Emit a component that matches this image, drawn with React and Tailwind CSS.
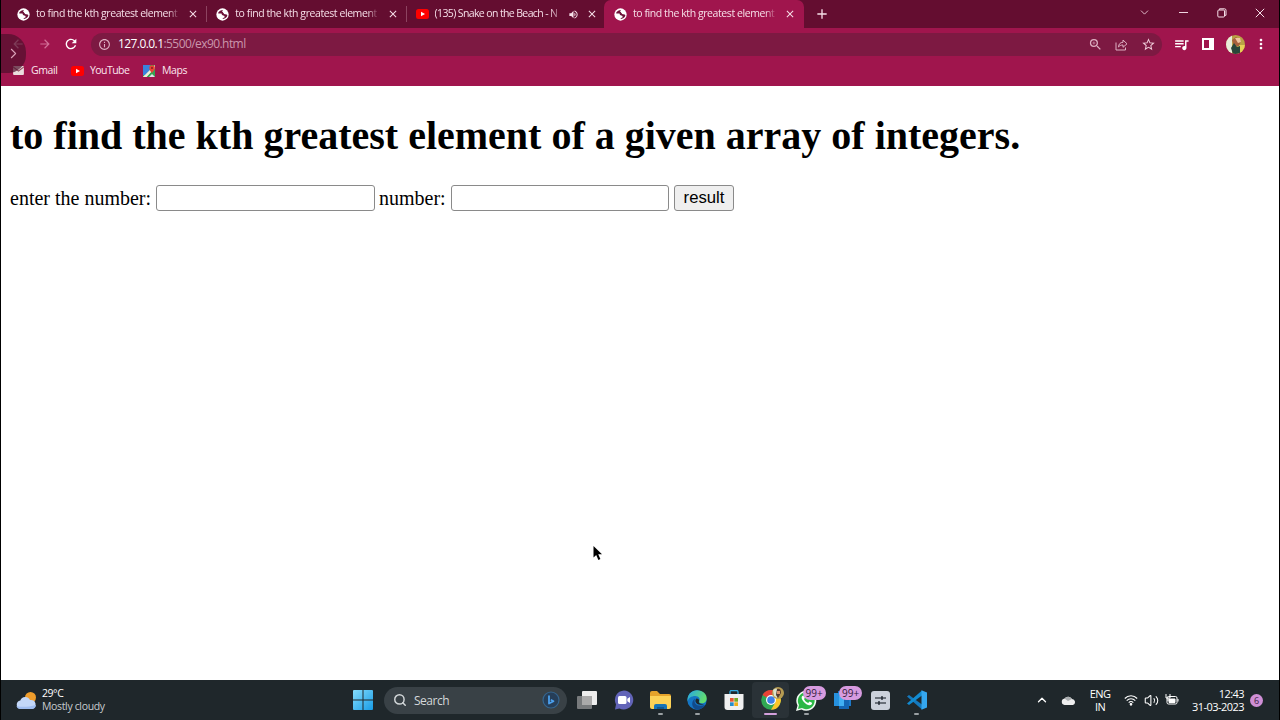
import { MdClose, MdAdd, MdArrowBack, MdArrowForward, MdRefresh, MdInfoOutline, MdZoomIn, MdStarBorder, MdQueueMusic, MdMoreVert, MdVolumeUp } from "react-icons/md";
import { LuChevronDown, LuChevronRight, LuChevronUp, LuSearch, LuVolume2 } from "react-icons/lu";

const TITLE = "to find the kth greatest element";

const tabs = [
  { id: 1, title: TITLE, icon: "globe" },
  { id: 2, title: TITLE, icon: "globe" },
  { id: 3, title: "(135) Snake on the Beach - N", icon: "youtube", sound: true },
];

function Globe() {
  return (
    <svg className="w-[13px] h-[13px] shrink-0" viewBox="0 0 26 26">
      <circle cx="13" cy="13" r="12.3" fill="#fff" />
      <path
        d="M4 10c2-4 6-6 10-6l-2 3 3 2 1 3 5 1c2 0 2 2 1 4-2 3-5 5-9 5l1-2 3-1v-3l-5-2-1-3-6 0z"
        fill="#6d1238"
      />
      <path d="M14 7l5-1 2 3-4 2-3-2z" fill="#fff" />
    </svg>
  );
}

function YouTubeIcon() {
  return (
    <svg className="w-[13px] h-[10px] shrink-0" viewBox="0 0 26 20">
      <rect x="0" y="0" width="26" height="20" rx="5" fill="#f00" />
      <path d="M10 5.500l8 4.500-8 4.500z" fill="#fff" />
    </svg>
  );
}

function Tab({ tab }) {
  return (
    <div className="flex items-center w-[199.3px] h-full pl-[9px]">
      {tab.icon === "globe" ? <Globe /> : <YouTubeIcon />}
      <span
        className={
          tab.sound
            ? "ml-[6px] w-[130px] shrink-0 whitespace-nowrap text-[10.5px] tracking-[-0.62px] mask-r-from-88% mask-r-to-100%"
            : "ml-[6px] w-[144px] shrink-0 whitespace-nowrap text-[10.5px] tracking-[-0.42px] mask-r-from-92% mask-r-to-100%"
        }
      >
        {tab.title}
      </span>
      {tab.sound && <MdVolumeUp className="ml-[3px] shrink-0" size={11} />}
      <MdClose className="ml-auto mr-[7px] shrink-0" size={12} />
      <span className={tab.sound ? "w-px h-4 shrink-0" : "w-px h-4 shrink-0 bg-[#8d4360]"} />
    </div>
  );
}

function TabStrip() {
  return (
    <div className="flex h-7 pl-[7px] bg-[#640d30] text-[#f6dfe8]">
      {tabs.map((tab) => (
        <Tab key={tab.id} tab={tab} />
      ))}
      <div className="-ml-[2px] flex items-center w-[200px] h-full rounded-t-[7px] bg-[#a0154d] pl-[10px] pr-[8px]">
        <Globe />
        <span className="ml-[6px] w-[144px] shrink-0 whitespace-nowrap text-[10.5px] tracking-[-0.42px] mask-r-from-92% mask-r-to-100%">
          {TITLE}
        </span>
        <MdClose className="ml-auto shrink-0" size={12} />
      </div>
      <div className="flex items-center ml-[10px]">
        <MdAdd size={16} />
      </div>
      <div className="ml-auto flex items-center pb-[3px]">
        <div className="w-[38.3px] flex justify-center">
          <LuChevronDown size={13} strokeWidth={1.500} />
        </div>
        <div className="w-[38.3px] flex justify-center">
          <span className="w-[9px] h-px bg-[#f0d5e0]" />
        </div>
        <div className="w-[38.3px] flex justify-center">
          <svg width="10" height="10" viewBox="0 0 10 10" fill="none" stroke="currentColor">
            <rect x=".8" y="2" width="6.700" height="7" rx="1" />
            <path d="M2.500 1.800V.8h5q1.500 0 1.500 1.500v5H7.800" />
          </svg>
        </div>
        <div className="w-[38.3px] flex justify-center">
          <svg width="10" height="10" viewBox="0 0 10 10" stroke="currentColor">
            <path d="M.8.800l8.400 8.400M9.200.8L.8 9.200" />
          </svg>
        </div>
      </div>
    </div>
  );
}

function Toolbar() {
  return (
    <div className="flex items-center h-8 bg-[#a0154d] text-[#f8dce7]">
      <div className="flex items-center pl-[10px] w-[90px]">
        <MdArrowBack size={14} className="text-[#f0a5c2]" />
        <MdArrowForward size={14} className="ml-[13px] text-[#d36f97]" />
        <MdRefresh size={16} className="ml-[11px] text-white" />
      </div>
      <div className="flex items-center w-[1071px] h-[23px] rounded-full bg-[#7d1942] pl-[7px] text-[#deb0c2]">
        <MdInfoOutline size={13} />
        <span className="ml-[7px] text-[12px] tracking-[-0.57px] leading-none text-[#cb96ac]">
          <span className="text-white">127.0.0.1</span>:5500/ex90.html
        </span>
        <div className="ml-auto flex items-center pr-[6px]">
          <MdZoomIn size={15} />
          <svg className="ml-[12px]" width="13" height="13" viewBox="0 0 13 13" fill="none" stroke="currentColor">
            <path d="M1 4.500v7.500h9.500V9.500M3.500 9c.2-3 1.800-4.700 4.500-4.700V2l4 3.800-4 3.500V7C6 7 4.700 7.600 3.500 9z" />
          </svg>
          <MdStarBorder className="ml-[13px] text-[#f1cedb]" size={15} />
        </div>
      </div>
      <MdQueueMusic size={17} className="ml-[11px] text-white" />
      <div className="ml-[12px] w-[12px] h-[12px] border-2 border-r-[5px] border-white" />
      <svg className="ml-[12px]" width="19" height="19" viewBox="0 0 19 19">
        <defs>
          <clipPath id="avatar">
            <circle cx="9.500" cy="9.500" r="9.500" />
          </clipPath>
        </defs>
        <g clipPath="url(#avatar)">
          <path d="M0 0h19v19H0z" fill="#b9a145" />
          <path d="M0 0h6v19H0z" fill="#e8ecd9" />
          <path d="M12 10h7v9h-7z" fill="#e6cf55" />
          <path d="M6 5l4-3 5 4-2 5H8z" fill="#a7623e" />
          <path d="M5 13l3-5 3 4 3-1 0 8H7z" fill="#29463a" />
          <path d="M9 3l5 0 1 4-3 1z" fill="#efc5a0" />
        </g>
      </svg>
      <MdMoreVert size={16} className="ml-[8px] text-white" />
    </div>
  );
}

function Bookmarks() {
  return (
    <div className="flex items-center h-[26px] pb-[5px] pl-[12px] bg-[#a0154d] text-[#fbe6ee] text-[10.5px] tracking-[-0.4px]">
      <svg width="11" height="9" viewBox="0 0 12 10">
        <rect width="12" height="10" rx="1" fill="#eadede" />
        <path d="M0 1l6 4.500L12 1" fill="none" stroke="#9b5267" strokeWidth="1.300" />
      </svg>
      <span className="ml-[7px] w-[27px] whitespace-nowrap">Gmail</span>
      <span className="ml-[13px] flex">
        <YouTubeIcon />
      </span>
      <span className="ml-[6px] w-[40px] whitespace-nowrap tracking-[-0.55px]">YouTube</span>
      <svg className="ml-[13px]" width="12" height="12" viewBox="0 0 12 12">
        <rect width="12" height="12" rx="1" fill="#34a453" />
        <path d="M0 12L12 0v3L3 12z" fill="#f2eccf" />
        <path d="M0 0h7v5l-5 5H0z" fill="#3b82dc" />
        <path d="M1.500 10.500L8 4l1.500 1.500-6 6.500H0z" fill="#f0ead9" />
        <path d="M12 12H6l3-3z" fill="#dfe3e8" />
        <path d="M9 8C7.500 6 6.300 4.800 6.300 3a2.800 2.800 0 015.600 0c0 1.800-1.500 3-2.900 5z" fill="#e94335" />
        <circle cx="9" cy="3" r="1" fill="#82221d" />
      </svg>
      <span className="ml-[7px]">Maps</span>
    </div>
  );
}

function Page() {
  return (
    <div className="flex-1 bg-white text-black pl-[9px] pt-[27px] font-['Liberation_Serif',serif]">
      <h1 className="text-[40px] leading-[46px] font-bold whitespace-nowrap">
        to find the kth greatest element of a given array of integers.
      </h1>
      <form className="flex items-center mt-[26px] h-[26px] text-[20px] leading-[26px]" onSubmit={(e) => e.preventDefault()}>
        <label className="w-[146px] pb-px whitespace-nowrap" htmlFor="numbers">
          enter the number:
        </label>
        <input id="numbers" className="w-[219px] h-[26px] border border-[#8a8a8a] rounded-[3px] bg-white" />
        <label className="ml-[4px] w-[72px] pb-px whitespace-nowrap" htmlFor="k">
          number:
        </label>
        <input id="k" className="w-[218px] h-[26px] border border-[#8a8a8a] rounded-[3px] bg-white" />
        <button className="ml-[5px] w-[60px] h-[26px] pt-px border border-[#8a8a8a] rounded-[3px] bg-[#efefef] text-[16.7px] leading-none font-['Liberation_Sans',sans-serif]">
          result
        </button>
      </form>
    </div>
  );
}

function Weather() {
  return (
    <div className="flex items-center w-[352px] pl-[15px]">
      <svg width="21" height="19" viewBox="0 0 21 19">
        <circle cx="14.500" cy="6.500" r="5.500" fill="#ef9d2c" />
        <path d="M4.500 18a4.300 4.300 0 01-.2-8.500A5.300 5.300 0 0114 9a4.600 4.600 0 012 9z" fill="#c3d7f8" />
        <path d="M4.500 18a4 4 0 01-4-3c5 1.500 12 1 19.500-1a4.400 4.400 0 01-4 4z" fill="#9fbdf0" />
      </svg>
      <div className="ml-[5px] pb-px text-[10.5px] leading-[13px] text-white">
        <p className="tracking-[-0.45px]">29°C</p>
        <p className="text-[#c8cccf] tracking-[-0.35px]">Mostly cloudy</p>
      </div>
    </div>
  );
}

function SearchBox() {
  return (
    <div className="ml-[11px] mr-[2px] flex items-center w-[183px] h-[27px] rounded-full bg-[#394146] pl-[9px] pr-[7px] text-[#d3d7d9]">
      <LuSearch size={14} strokeWidth={2.500} />
      <span className="ml-[7px] pt-px text-[12px] tracking-[-0.5px]">Search</span>
      <svg className="ml-auto" width="18" height="18" viewBox="0 0 18 18">
        <circle cx="9" cy="9" r="8" fill="#263e58" stroke="#35658e" strokeWidth="1.200" />
        <path d="M7 4.500v8l4.500-2.300-2.700-1.500" fill="none" stroke="#4ba0ee" strokeWidth="1.800" strokeLinejoin="round" />
      </svg>
    </div>
  );
}

function StartIcon() {
  return (
    <svg width="20" height="20" viewBox="0 0 20 20">
      <defs>
        <linearGradient id="start" x2="1" y2="1">
          <stop stopColor="#86dcfc" />
          <stop offset="1" stopColor="#179be5" />
        </linearGradient>
      </defs>
      <path d="M0 1q0-1 1-1h8.500v9.500H0zM10.500 0H19q1 0 1 1v8.500h-9.500zM0 10.500h9.500V20H1q-1 0-1-1zM10.500 10.500H20V19q0 1-1 1h-8.500z" fill="url(#start)" />
    </svg>
  );
}

function TaskViewIcon() {
  return (
    <svg width="20" height="19" viewBox="0 0 20 19">
      <rect x="5" y="0" width="15" height="14" rx="1" fill="#ededed" />
      <rect x="0" y="5" width="15" height="13" rx="1" fill="#777a7c" />
      <path d="M5 5h10v9H5z" fill="#aaa" />
    </svg>
  );
}

function ChatIcon() {
  return (
    <svg width="20" height="20" viewBox="0 0 20 20">
      <path d="M10 .5a9.500 9.500 0 11-4.500 18L1 19.500l1-5A9.500 9.500 0 0110 .5z" fill="#6264b8" />
      <rect x="4" y="6" width="8.500" height="8" rx="1.500" fill="#fff" />
      <path d="M13.300 8.700L16 7v6l-2.700-1.700z" fill="#fff" />
    </svg>
  );
}

function FolderIcon() {
  return (
    <svg width="21" height="19" viewBox="0 0 21 19">
      <path d="M0 2q0-2 2-2h5l3 3h9q2 0 2 2v5H0z" fill="#e5a32b" />
      <path d="M0 5h21v11q0 2-2 2H2q-2 0-2-2z" fill="#fcd257" />
      <path d="M4 18v-3q0-2 2-2h9q2 0 2 2v3z" fill="#1674b8" />
      <path d="M7 18v-2h7v2z" fill="#10578e" />
    </svg>
  );
}

function EdgeIcon() {
  return (
    <svg width="20" height="20" viewBox="0 0 20 20">
      <defs>
        <linearGradient id="edge" x2="1" y2=".4">
          <stop stopColor="#25a6e8" />
          <stop offset="1" stopColor="#62dc70" />
        </linearGradient>
      </defs>
      <circle cx="10" cy="10" r="9.700" fill="#1475c4" />
      <path d="M.5 9C1 4 5 .3 10 .3c6 0 9.700 4 9.700 8 0 3-2 5-4.700 5-2 0-3.200-.8-2.700-1.800 1.400-2.700-.5-5.500-4-5.500C4.500 6 1 8 .5 12z" fill="url(#edge)" />
      <path d="M8 8.500c-2 5 2 9 10 6.500-2 3.300-5 4.700-8 4.700C4 18.500 4 11 8 8.500z" fill="#114a8b" />
      <path d="M9.500 8.500c2 0 3 1.200 2.400 3-.8 2 2.600 3 5.600 2.200-3 2.300-8.500.8-9-2.200-.2-1.200.2-2.400 1-3z" fill="#1f272b" />
    </svg>
  );
}

function StoreIcon() {
  return (
    <svg width="20" height="20" viewBox="0 0 20 20">
      <path d="M6 5V2q0-1.500 1.500-1.500h5Q14 .5 14 2v3" fill="none" stroke="#35a9df" strokeWidth="1.300" />
      <path d="M.5 4h19v13q0 3-3 3h-13q-3 0-3-3z" fill="#f0f0f0" />
      <path d="M6 8h3.700v3.700H6z" fill="#e75431" />
      <path d="M10.300 8H14v3.700h-3.700z" fill="#73a928" />
      <path d="M6 12.300h3.700V16H6z" fill="#258dcc" />
      <path d="M10.300 12.300H14V16h-3.700z" fill="#efae19" />
    </svg>
  );
}

function ChromeIcon() {
  return (
    <svg width="26" height="24" viewBox="0 0 26 24">
      <circle cx="12" cy="14" r="9.800" fill="#30a853" />
      <path d="M12 14L3.500 9A9.800 9.800 0 0120.500 9z" fill="#e84235" />
      <path d="M12 14V9h8.500A9.800 9.800 0 0112 23.800l4.300-7.300z" fill="#fbc52c" />
      <circle cx="12" cy="14" r="5" fill="#fff" />
      <circle cx="12" cy="14" r="3.800" fill="#3f7fe8" />
      <circle cx="19" cy="7" r="6" fill="#b59b52" />
      <path d="M14 4q3-3 6 0l-2 8-3-2z" fill="#dce2cc" />
      <path d="M18 3q4-1 4 4l-3 5-2-3z" fill="#53392d" />
      <path d="M18 5h3v3h-3z" fill="#d8936c" />
    </svg>
  );
}

function WhatsAppIcon() {
  return (
    <svg width="21" height="21" viewBox="0 0 21 21">
      <path d="M0 21l1.500-5.500A10 10 0 115.500 19.500z" fill="#f3fbf4" />
      <path d="M2 19l1-4A8.400 8.400 0 116 18z" fill="#2bb845" />
      <path
        d="M7.200 5.500c-1.500.3-2 2-1.200 3.700 1.300 3 4 5.300 7 6 2 .3 3.200-1 3-2.500l-2.500-1.300-1.300 1.500c-2-.8-3.300-2-4.200-4l1-1.200z"
        fill="#fff"
      />
    </svg>
  );
}

function PhoneLinkIcon() {
  return (
    <svg width="20" height="18" viewBox="0 0 20 18">
      <path d="M5 0h13v15H5z" fill="#1c78c8" />
      <path d="M1 2h10v13H1z" fill="#2691df" />
      <path d="M6 5h10v13H6z" fill="#1566b4" />
      <path d="M6 5h5v10H6z" fill="#41b0f3" />
    </svg>
  );
}

function SettingsIcon() {
  return (
    <svg width="19" height="19" viewBox="0 0 19 19">
      <rect width="19" height="19" rx="3" fill="#cbd1db" />
      <path d="M4 7h11M4 12h11" stroke="#4a5059" strokeWidth="1.300" />
      <path d="M11 5.300v3.400M8 10.300v3.400" stroke="#323943" strokeWidth="2" />
    </svg>
  );
}

function VsCodeIcon() {
  return (
    <svg width="20" height="20" viewBox="0 0 20 20">
      <path d="M0 6.500L2 5l13 9.500v5z" fill="#1579bd" />
      <path d="M0 13.500L2 15l13-9.500v-5z" fill="#128bd1" />
      <path d="M14.500.2L20 2.500v15l-5.500 2.300z" fill="#35a7ef" />
    </svg>
  );
}

const apps = [
  { name: "Task view", icon: <TaskViewIcon /> },
  { name: "Chat", icon: <ChatIcon /> },
  { name: "Files", icon: <FolderIcon />, running: true },
  { name: "Edge", icon: <EdgeIcon />, running: true },
  { name: "Store", icon: <StoreIcon /> },
  { name: "Chrome", icon: <ChromeIcon />, active: true },
  { name: "WhatsApp", icon: <WhatsAppIcon />, running: true, badge: "99+" },
  { name: "Phone", icon: <PhoneLinkIcon />, badge: "99+" },
  { name: "Settings", icon: <SettingsIcon /> },
  { name: "VS Code", icon: <VsCodeIcon />, running: true },
];

function AppButton({ app }) {
  return (
    <div
      title={app.name}
      className={`relative w-[36.6px] h-9 flex items-center justify-center ${app.active ? "bg-[#2a3237] rounded-[4px]" : ""}`}
    >
      <span className={app.active ? "pl-[4px] pb-[4px]" : ""}>{app.icon}</span>
      {app.badge && (
        <span className="absolute left-[14px] top-[4px] w-[23px] h-[14px] rounded-full bg-[#d79be0] text-[#33203a] text-[10px] leading-[14px] text-center">
          {app.badge}
        </span>
      )}
      {app.running && <span className="absolute bottom-[3px] w-[5px] h-[2px] rounded-full bg-[#9aa0a3]" />}
      {app.active && <span className="absolute bottom-[3px] w-[13px] h-[2px] rounded-full bg-[#d4a0dc]" />}
    </div>
  );
}

function Tray() {
  return (
    <div className="ml-auto flex items-center pr-[16px] text-white text-[11px] leading-[13px]">
      <LuChevronUp size={14} strokeWidth={2.200} />
      <svg className="ml-[12px]" width="15" height="11" viewBox="0 0 15 11">
        <path d="M3.500 10a3.300 3.300 0 010-6.500A4.500 4.500 0 0111 4a3.100 3.100 0 011 6z" fill="#eee" />
        <path d="M3.500 3.500A4.500 4.500 0 0111 4l-4 2z" fill="#a9adaf" />
      </svg>
      <div className="ml-[13px] w-[22px] text-center tracking-[-0.6px]">
        <p>ENG</p>
        <p>IN</p>
      </div>
      <svg className="ml-[13px]" width="14" height="12" viewBox="0 0 14 12" fill="none" stroke="#fff" strokeWidth="1.100">
        <path d="M.8 4.500a8.500 8.500 0 0112.400 0M2.700 6.600a6 6 0 018.600 0M4.700 8.600a3.300 3.300 0 014.600 0" />
        <circle cx="7" cy="10.300" r=".8" fill="#fff" />
      </svg>
      <LuVolume2 className="ml-[6px]" size={15} strokeWidth={1.700} />
      <svg className="ml-[6px]" width="14" height="12" viewBox="0 0 14 12" fill="none" stroke="#fff">
        <rect x="2" y="2.500" width="10" height="7.500" rx="1.500" />
        <path d="M4 5h6v3.500H4z" fill="#fff" />
        <path d="M13 5v2.500M1 0v4h4V0M3 4v3" />
      </svg>
      <div className="ml-[11px] w-[54px] text-right tracking-[-0.55px] whitespace-nowrap">
        <p>12:43</p>
        <p>31-03-2023</p>
      </div>
      <span className="ml-[6px] w-[13px] h-[13px] rounded-full bg-[#cf8fd6] text-[#3a1f42] text-[9px] leading-[13px] text-center">
        6
      </span>
    </div>
  );
}

function Taskbar() {
  return (
    <div className="flex items-center h-10 bg-[#1f272b]">
      <Weather />
      <StartIcon />
      <SearchBox />
      {apps.map((app) => (
        <AppButton key={app.name} app={app} />
      ))}
      <Tray />
    </div>
  );
}

function App() {
  return (
    <div className="relative flex flex-col w-[1280px] h-[720px] overflow-hidden border-x border-black bg-white font-['Open_Sans',sans-serif]">
      <TabStrip />
      <Toolbar />
      <Bookmarks />
      <Page />
      <Taskbar />
      {/* edge gesture handle */}
      <div className="absolute left-0 top-[34px] w-[25px] h-[39px] rounded-r-[18px] rounded-bl-none bg-[#4d0f2b]/70 flex items-center justify-center text-[#d9a3b8]">
        <LuChevronRight size={17} strokeWidth={1.500} />
      </div>
      <svg className="absolute left-[592px] top-[546px]" width="9" height="15" viewBox="0 0 9 15">
        <path d="M.5 0v11.500l2.700-2.500 2.200 5 2-1-2.200-4.700H9z" fill="#000" />
      </svg>
    </div>
  );
}

export default App;
